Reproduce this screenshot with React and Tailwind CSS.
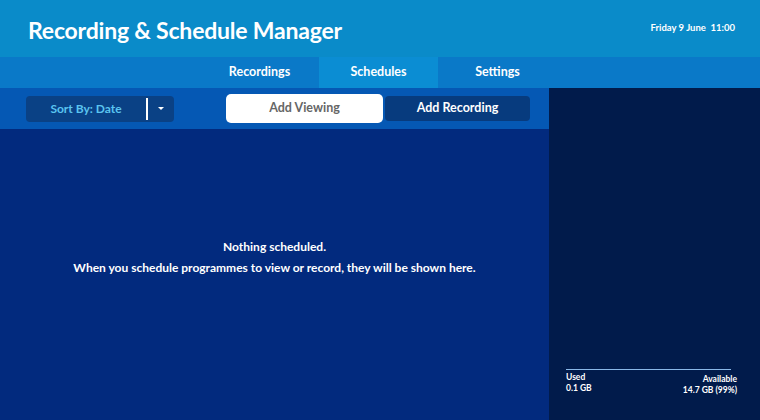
import React from "react";

const tabs = ["Recordings", "Schedules", "Settings"];

function App() {
  return (
    <div
      className="w-[760px] h-[420px] overflow-hidden flex flex-col bg-[#022a7e] text-white"
      style={{ fontFamily: "Lato, 'Open Sans', sans-serif" }}
    >
      {/* header */}
      <div className="h-[57px] shrink-0 bg-[#0a8bc9] flex items-center justify-between pl-[28px] pr-[25px] pt-[3px]">
        <div className="text-[23px] font-bold tracking-[-0.2px]">Recording &amp; Schedule Manager</div>
        <div className="text-[9.5px] font-bold pb-[3px]">Friday 9 June&nbsp;&nbsp;11:00</div>
      </div>

      {/* tabs */}
      <div className="h-[31px] shrink-0 bg-[#0a79c8] flex pl-[200px]">
        {tabs.map((t) => (
          <div
            key={t}
            className={
              "w-[119px] flex items-center justify-center text-[12.5px] font-bold " +
              (t === "Schedules" ? "bg-[#0b8dd3]" : "")
            }
          >
            {t}
          </div>
        ))}
      </div>

      <div className="flex flex-1">
        {/* left */}
        <div className="w-[549px] flex flex-col">
          <div className="h-[41px] shrink-0 bg-[#0558b4] flex items-center pl-[26px]">
            <div className="w-[148px] h-[26px] rounded-[4px] bg-[#0a4185] flex items-center">
              <div className="w-[120px] text-center text-[12px] text-[#5ac4f0] font-bold">Sort By: Date</div>
              <div className="w-[1.5px] h-[22px] bg-white" />
              <div className="flex-1 flex justify-center">
                <div className="w-0 h-0 border-l-[3px] border-r-[3px] border-t-[3px] border-l-transparent border-r-transparent border-t-white" />
              </div>
            </div>
            <div className="ml-[52px] w-[157px] h-[29px] rounded-[5px] bg-white flex items-center justify-center text-[12.5px] text-[#666] font-bold">
              Add Viewing
            </div>
            <div className="ml-[2px] w-[145px] h-[25px] rounded-[4px] bg-[#073b7e] flex items-center justify-center text-[12.5px] font-bold">
              Add Recording
            </div>
          </div>
          <div className="flex-1 flex flex-col items-center justify-center text-[12px] font-bold leading-[21px] pb-[35px]">
            <div>Nothing scheduled.</div>
            <div>When you schedule programmes to view or record, they will be shown here.</div>
          </div>
        </div>

        {/* right */}
        <div className="flex-1 bg-[#011b4b] flex flex-col justify-end pl-[17px] pr-[23px] pb-[24px]">
          <div className="h-[1px] bg-[#8ab8e8] mr-[6px] mb-[2px]" />
          <div className="flex justify-between text-[8.5px] font-bold leading-[11px]">
            <div>
              <div>Used</div>
              <div>0.1 GB</div>
            </div>
            <div className="text-right pt-[2px]">
              <div>Available</div>
              <div>14.7 GB (99%)</div>
            </div>
          </div>
        </div>
      </div>
    </div>
  );
}

export default App;
